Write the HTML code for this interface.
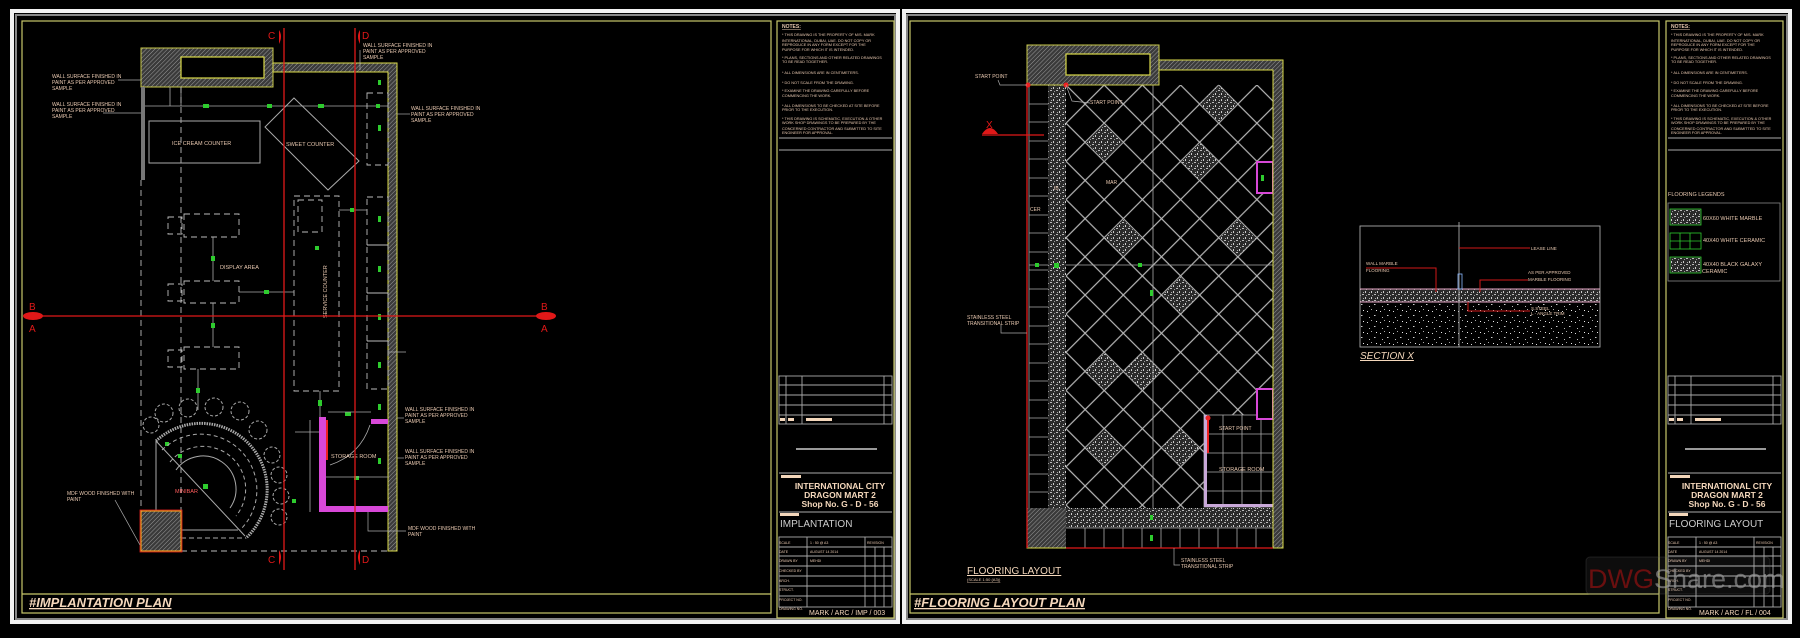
<!DOCTYPE html>
<html><head><meta charset="utf-8"><style>
html,body{margin:0;padding:0;background:#000;}
svg{display:block;}
text{font-family:"Liberation Sans",sans-serif;}
</style></head><body>
<svg width="1800" height="638" viewBox="0 0 1800 638" xmlns="http://www.w3.org/2000/svg">
<defs>
<pattern id="hatch" width="3" height="3" patternUnits="userSpaceOnUse" patternTransform="rotate(45)">
<rect width="3" height="3" fill="#3a3a3a"/><line x1="0" y1="0" x2="0" y2="3" stroke="#9a9a9a" stroke-width="1"/></pattern>
<pattern id="dots" width="6" height="6" patternUnits="userSpaceOnUse">
<rect width="6" height="6" fill="#2a2a2a"/><rect x="0" y="0" width="2" height="1" fill="#bbb"/><rect x="3" y="3" width="1" height="2" fill="#ccc"/><rect x="4" y="1" width="1" height="1" fill="#999"/><rect x="1" y="4" width="1" height="1" fill="#aaa"/></pattern>
<pattern id="speck" width="13" height="11" patternUnits="userSpaceOnUse">
<rect x="2" y="3" width="1" height="1" fill="#ddd"/><rect x="9" y="7" width="1.5" height="1" fill="#ccc"/><rect x="6" y="1" width="1" height="1" fill="#aaa"/><rect x="11" y="2" width="1" height="1" fill="#eee"/><rect x="4" y="9" width="1" height="1" fill="#bbb"/></pattern>
<pattern id="diag" width="27" height="27" patternUnits="userSpaceOnUse" patternTransform="translate(1066,85) rotate(45)">
<rect width="27" height="27" fill="none" stroke="#b8b8b8" stroke-width="1.2"/></pattern>
<clipPath id="fl"><rect x="1066" y="85" width="207" height="423"/></clipPath>
</defs>

<!-- ============ LEFT SHEET ============ -->
<rect x="12" y="11" width="886" height="611" fill="none" stroke="#f2f2f2" stroke-width="4"/>
<rect x="16" y="15" width="879" height="604" fill="none" stroke="#888" stroke-width="2"/>
<rect x="22" y="21" width="749" height="592" fill="none" stroke="#c8c86a" stroke-width="1.2"/>
<line x1="22" y1="594" x2="771" y2="594" stroke="#c8c86a" stroke-width="1.2"/>
<text x="29" y="607" font-size="13" font-weight="bold" font-style="italic" fill="#f5d8bc" text-decoration="underline">#IMPLANTATION PLAN</text>

<rect x="141" y="48" width="40" height="39" fill="url(#hatch)"/>
<rect x="181" y="48" width="92" height="39" fill="url(#hatch)"/>
<rect x="181" y="57" width="83" height="21" fill="#000" stroke="#dada4a" stroke-width="1.2"/>
<rect x="141" y="48" width="132" height="39" fill="none" stroke="#c8c84a" stroke-width="1"/>
<rect x="273" y="63" width="124" height="9" fill="url(#hatch)"/>
<rect x="388" y="63" width="9" height="488" fill="url(#hatch)"/>
<path d="M273 63 H397 V551 H388 V72 H273 Z" fill="none" stroke="#dada4a" stroke-width="1"/>
<rect x="141" y="87" width="4" height="93" fill="#777"/>
<line x1="145" y1="106" x2="388" y2="106" stroke="#aaa" stroke-width="0.8"/>
<line x1="181" y1="87" x2="181" y2="106" stroke="#aaa" stroke-width="0.8"/>
<line x1="170" y1="87" x2="170" y2="106" stroke="#aaa" stroke-width="0.8"/>
<g stroke="#bbb" stroke-width="0.9" fill="none" stroke-dasharray="6,4">
<line x1="181" y1="87" x2="181" y2="551"/>
<line x1="141" y1="180" x2="141" y2="511"/>
<line x1="181" y1="551" x2="388" y2="551"/>
<rect x="367" y="93" width="21" height="72"/>
<rect x="367" y="197" width="21" height="48"/>
<rect x="367" y="245" width="21" height="48"/>
<rect x="367" y="293" width="21" height="48"/>
<rect x="367" y="341" width="21" height="48"/>
<rect x="294" y="196" width="45" height="195"/>
<rect x="298" y="200" width="24" height="32"/>
<rect x="184" y="214" width="55" height="23"/><rect x="168" y="217" width="14" height="17"/>
<rect x="184" y="281" width="55" height="22"/><rect x="168" y="284" width="14" height="17"/>
<rect x="184" y="347" width="55" height="22"/><rect x="168" y="350" width="14" height="17"/>
</g>
<rect x="149" y="121" width="111" height="42" fill="none" stroke="#aaa" stroke-width="1"/>
<text x="172" y="145" font-size="5.5" fill="#e8c8b0">ICE CREAM COUNTER</text>
<polygon points="294,98 359,161 328,190 265,127" fill="none" stroke="#aaa" stroke-width="1"/>
<text x="286" y="146" font-size="5.5" fill="#e8c8b0">SWEET COUNTER</text>
<text x="220" y="269" font-size="5.5" fill="#e8c8b0">DISPLAY AREA</text>
<text x="327" y="318" font-size="5.5" fill="#e8c8b0" transform="rotate(-90 327 318)">SERVICE COUNTER</text>
<g stroke="#aaa" stroke-width="0.8">
<line x1="213" y1="237" x2="213" y2="281"/><line x1="213" y1="303" x2="213" y2="347"/>
<line x1="239" y1="292" x2="294" y2="292"/><line x1="339" y1="210" x2="367" y2="210"/>
<line x1="198" y1="369" x2="198" y2="410"/><line x1="320" y1="391" x2="320" y2="417"/>
<line x1="388" y1="352" x2="406" y2="352"/>
</g>
<g fill="#2ecc2e"><rect x="203" y="104" width="6" height="4"/><rect x="267" y="104" width="5" height="4"/><rect x="318" y="104" width="6" height="4"/><rect x="376" y="104" width="4" height="4"/><rect x="378" y="80" width="3" height="5"/><rect x="378" y="125" width="3" height="6"/><rect x="378" y="216" width="3" height="6"/><rect x="378" y="266" width="3" height="6"/><rect x="378" y="314" width="3" height="6"/><rect x="378" y="362" width="3" height="6"/><rect x="378" y="404" width="3" height="6"/><rect x="350" y="208" width="4" height="4"/><rect x="315" y="246" width="4" height="4"/><rect x="211" y="256" width="4" height="5"/><rect x="211" y="323" width="4" height="5"/><rect x="264" y="290" width="5" height="4"/><rect x="196" y="388" width="4" height="5"/><rect x="318" y="400" width="4" height="6"/><rect x="345" y="412" width="6" height="4"/><rect x="378" y="458" width="3" height="6"/><rect x="354" y="476" width="5" height="4"/><rect x="292" y="499" width="4" height="4"/><rect x="203" y="484" width="5" height="5"/><rect x="165" y="442" width="4" height="4"/><rect x="178" y="454" width="4" height="4"/></g>
<g fill="none" stroke="#aaa" stroke-width="1">
<path d="M156 441 A61 61 0 1 1 246 538" stroke-width="3" stroke-dasharray="1.5,1"/>
<path d="M162 450 A52 52 0 1 1 240 530" stroke-dasharray="4,3"/>
<path d="M170 462 A40 40 0 1 1 236 516" stroke-dasharray="4,3"/>
<path d="M176 470 A32 32 0 1 1 230 508"/>
<line x1="156" y1="441" x2="245" y2="536"/>
<line x1="156" y1="441" x2="156" y2="520"/>
<line x1="181" y1="538" x2="246" y2="538" stroke-dasharray="5,3"/>
<line x1="181" y1="530" x2="238" y2="530"/>
<g stroke-dasharray="3,2"><circle cx="164" cy="413" r="9"/><circle cx="188" cy="408" r="9"/><circle cx="214" cy="407" r="9"/><circle cx="240" cy="411" r="9"/><circle cx="258" cy="430" r="9"/><circle cx="272" cy="455" r="8"/><circle cx="279" cy="475" r="8"/><circle cx="281" cy="496" r="8"/><circle cx="279" cy="517" r="8"/><circle cx="151" cy="425" r="8"/></g>
</g>
<text x="175" y="493" font-size="5.5" fill="#ff5c5c">MINIBAR</text>
<rect x="141" y="511" width="40" height="40" fill="url(#hatch)" stroke="#f0a020" stroke-width="1.2"/>
<rect x="140" y="510" width="42" height="42" fill="none" stroke="#e02020" stroke-width="0.8"/>
<rect x="319" y="417" width="7" height="95" fill="#d848d8"/>
<rect x="319" y="506" width="69" height="6" fill="#d848d8"/>
<rect x="371" y="419" width="17" height="5" fill="#d848d8"/>
<rect x="326" y="420" width="2" height="40" fill="#e22"/>
<g stroke="#aaa" stroke-width="0.8" fill="none"><line x1="328" y1="412" x2="371" y2="412"/><line x1="326" y1="477" x2="388" y2="477"/><line x1="310" y1="420" x2="310" y2="512"/><line x1="295" y1="432" x2="319" y2="432"/><path d="M330 465 Q360 455 370 425"/></g>
<text x="331" y="458" font-size="5.5" fill="#e8c8b0">STORAGE ROOM</text>
<g stroke="#e01818" stroke-width="1.3">
<line x1="284" y1="28" x2="284" y2="570"/><line x1="355" y1="28" x2="355" y2="570"/>
<line x1="28" y1="316" x2="552" y2="316"/></g>
<g fill="#e01818"><path d="M279 30 Q283 36 279 44 Z"/><path d="M360 30 Q356 36 360 44 Z"/><path d="M279 550 Q283 557 279 565 Z"/><path d="M360 550 Q356 557 360 565 Z"/>
<ellipse cx="33" cy="316" rx="10" ry="4"/><ellipse cx="546" cy="316" rx="10" ry="4"/></g>
<g fill="#e01818" font-size="10"><text x="268" y="39">C</text><text x="362" y="39">D</text><text x="268" y="563">C</text><text x="362" y="563">D</text><text x="29" y="310">B</text><text x="29" y="332">A</text><text x="541" y="310">B</text><text x="541" y="332">A</text></g>
<g font-size="5" fill="#e8c8b0">
<text x="52" y="78">WALL SURFACE FINISHED IN</text><text x="52" y="84">PAINT AS PER APPROVED</text><text x="52" y="90">SAMPLE</text>
<text x="52" y="106">WALL SURFACE FINISHED IN</text><text x="52" y="112">PAINT AS PER APPROVED</text><text x="52" y="118">SAMPLE</text>
<text x="363" y="47">WALL SURFACE FINISHED IN</text><text x="363" y="53">PAINT AS PER APPROVED</text><text x="363" y="59">SAMPLE</text>
<text x="411" y="110">WALL SURFACE FINISHED IN</text><text x="411" y="116">PAINT AS PER APPROVED</text><text x="411" y="122">SAMPLE</text>
<text x="405" y="411">WALL SURFACE FINISHED IN</text><text x="405" y="417">PAINT AS PER APPROVED</text><text x="405" y="423">SAMPLE</text>
<text x="405" y="453">WALL SURFACE FINISHED IN</text><text x="405" y="459">PAINT AS PER APPROVED</text><text x="405" y="465">SAMPLE</text>
<text x="67" y="495">MDF WOOD FINISHED WITH</text><text x="67" y="501">PAINT</text>
<text x="408" y="530">MDF WOOD FINISHED WITH</text><text x="408" y="536">PAINT</text>
</g>
<g stroke="#aaa" stroke-width="0.7" fill="none"><polyline points="118,80 141,80"/><polyline points="103,113 141,113"/><polyline points="360,50 360,70"/><polyline points="397,114 410,114"/><polyline points="397,418 404,418"/><polyline points="397,458 404,458"/><polyline points="115,500 140,545"/><polyline points="368,512 368,531 406,531"/></g>

<rect x="777" y="21" width="117" height="597" fill="none" stroke="#c8c86a" stroke-width="1.2"/>
<g font-size="3.8" fill="#e8c8b0">
<text x="782" y="28" font-size="5" font-weight="bold" text-decoration="underline">NOTES:</text>
<text x="782" y="36">* THIS DRAWING IS THE PROPERTY OF M/S. MARK</text>
<text x="782" y="42">INTERNATIONAL, DUBAI, UAE. DO NOT COPY OR</text>
<text x="782" y="46">REPRODUCE IN ANY FORM EXCEPT FOR THE</text>
<text x="782" y="51">PURPOSE FOR WHICH IT IS INTENDED.</text>
<text x="782" y="59">* PLANS, SECTIONS AND OTHER RELATED DRAWINGS</text>
<text x="782" y="63">TO BE READ TOGETHER.</text>
<text x="782" y="74">* ALL DIMENSIONS ARE IN CENTIMETERS.</text>
<text x="782" y="84">* DO NOT SCALE FROM THE DRAWING.</text>
<text x="782" y="92">* EXAMINE THE DRAWING CAREFULLY BEFORE</text>
<text x="782" y="97">COMMENCING THE WORK.</text>
<text x="782" y="107">* ALL DIMENSIONS TO BE CHECKED AT SITE BEFORE</text>
<text x="782" y="111">PRIOR TO THE EXECUTION.</text>
<text x="782" y="120">* THIS DRAWING IS SCHEMATIC, EXECUTION &amp; OTHER</text>
<text x="782" y="124">WORK SHOP DRAWINGS TO BE PREPARED BY THE</text>
<text x="782" y="130">CONCERNED CONTRACTOR AND SUBMITTED TO SITE</text>
<text x="782" y="134">ENGINEER FOR APPROVAL.</text>
</g>
<g stroke="#aaa" stroke-width="0.9" fill="none">
<line x1="779" y1="138" x2="892" y2="138"/><line x1="779" y1="150" x2="892" y2="150"/>
<rect x="779" y="376" width="113" height="48"/>
<line x1="779" y1="385" x2="892" y2="385"/><line x1="779" y1="395" x2="892" y2="395"/><line x1="779" y1="405" x2="892" y2="405"/><line x1="779" y1="415" x2="892" y2="415"/>
<line x1="786" y1="376" x2="786" y2="424"/><line x1="802" y1="376" x2="802" y2="424"/><line x1="884" y1="376" x2="884" y2="424"/>
<line x1="779" y1="473" x2="892" y2="473"/><line x1="779" y1="512" x2="892" y2="512"/>
<rect x="779" y="537" width="113" height="70"/>
<line x1="779" y1="547" x2="892" y2="547"/><line x1="779" y1="556" x2="892" y2="556"/><line x1="779" y1="566" x2="892" y2="566"/><line x1="779" y1="576" x2="892" y2="576"/><line x1="779" y1="586" x2="892" y2="586"/><line x1="779" y1="596" x2="892" y2="596"/>
<line x1="807" y1="537" x2="807" y2="607"/><line x1="865" y1="537" x2="865" y2="607"/><line x1="875" y1="547" x2="875" y2="607"/><line x1="884" y1="547" x2="884" y2="607"/>
</g>
<line x1="796" y1="449" x2="877" y2="449" stroke="#ccc" stroke-width="1.5"/>
<g fill="#f5d8bc"><rect x="780" y="418" width="5" height="3"/><rect x="788" y="418" width="6" height="3"/><rect x="806" y="418" width="26" height="3"/><rect x="781" y="475" width="20" height="3"/><rect x="780" y="513" width="19" height="3"/></g>
<g fill="#f5d8bc" font-weight="bold" font-size="8.5" text-anchor="middle">
<text x="840" y="489">INTERNATIONAL CITY</text><text x="840" y="498">DRAGON MART 2</text><text x="840" y="507">Shop No. G - D - 56</text></g>
<text x="780" y="527" font-size="10" fill="#ccc">IMPLANTATION</text>
<g font-size="3.5" fill="#e8c8b0"><text x="779" y="544">SCALE</text><text x="779" y="553">DATE</text><text x="779" y="562">DRAWN BY</text><text x="779" y="572">CHECKED BY</text><text x="779" y="582">ARCH.</text><text x="779" y="591">STRUCT.</text><text x="779" y="601">PROJECT NO.</text><text x="779" y="610">DRAWING NO.</text><text x="810" y="544">1 : 50 @ A3</text><text x="810" y="553">AUGUST 14 2014</text><text x="810" y="562">MEHDI</text><text x="867" y="544">REVISION</text></g>
<text x="809" y="615" font-size="7" fill="#f5d8bc">MARK / ARC / IMP / 003</text>

<!-- ============ RIGHT SHEET ============ -->
<rect x="904" y="11" width="886" height="611" fill="none" stroke="#f2f2f2" stroke-width="4"/>
<rect x="907" y="15" width="880" height="604" fill="none" stroke="#888" stroke-width="2"/>
<rect x="910" y="21" width="749" height="592" fill="none" stroke="#c8c86a" stroke-width="1.2"/>
<line x1="910" y1="594" x2="1659" y2="594" stroke="#c8c86a" stroke-width="1.2"/>
<text x="914" y="607" font-size="13" font-weight="bold" font-style="italic" fill="#f5d8bc" text-decoration="underline">#FLOORING LAYOUT PLAN</text>

<g clip-path="url(#fl)"><rect x="1000" y="0" width="400" height="600" fill="url(#diag)"/></g>
<g fill="url(#dots)" stroke="#bbb" stroke-width="0.6">
<polygon points="1104.2,123.3 1123.2,142.3 1104.2,161.3 1085.2,142.3"/>
<polygon points="1199.6,142.4 1218.6,161.4 1199.6,180.4 1180.6,161.4"/>
<polygon points="1218.7,85.1 1237.7,104.1 1218.7,123.1 1199.7,104.1"/>
<polygon points="1123.3,218.7 1142.3,237.7 1123.3,256.7 1104.3,237.7"/>
<polygon points="1237.8,218.7 1256.8,237.7 1237.8,256.7 1218.8,237.7"/>
<polygon points="1180.5,276 1199.5,295 1180.5,314 1161.5,295"/>
<polygon points="1104.2,352.4 1123.2,371.4 1104.2,390.4 1085.2,371.4"/>
<polygon points="1142.4,352.4 1161.4,371.4 1142.4,390.4 1123.4,371.4"/>
<polygon points="1104.2,428.7 1123.2,447.7 1104.2,466.7 1085.2,447.7"/>
<polygon points="1180.5,428.7 1199.5,447.7 1180.5,466.7 1161.5,447.7"/>
</g>
<line x1="1153" y1="85" x2="1153" y2="508" stroke="#aaa" stroke-width="0.8"/>
<line x1="1029" y1="265" x2="1273" y2="265" stroke="#aaa" stroke-width="0.8"/>
<rect x="1048" y="85" width="18" height="423" fill="url(#dots)"/>
<g stroke="#aaa" stroke-width="0.8"><line x1="1029" y1="85" x2="1029" y2="508"/>
<line x1="1029" y1="104" x2="1048" y2="104"/><line x1="1029" y1="122" x2="1048" y2="122"/><line x1="1029" y1="141" x2="1048" y2="141"/><line x1="1029" y1="159" x2="1048" y2="159"/><line x1="1029" y1="178" x2="1048" y2="178"/><line x1="1029" y1="196" x2="1048" y2="196"/><line x1="1029" y1="215" x2="1048" y2="215"/><line x1="1029" y1="233" x2="1048" y2="233"/><line x1="1029" y1="252" x2="1048" y2="252"/><line x1="1029" y1="270" x2="1048" y2="270"/><line x1="1029" y1="289" x2="1048" y2="289"/><line x1="1029" y1="307" x2="1048" y2="307"/><line x1="1029" y1="326" x2="1048" y2="326"/><line x1="1029" y1="344" x2="1048" y2="344"/><line x1="1029" y1="363" x2="1048" y2="363"/><line x1="1029" y1="381" x2="1048" y2="381"/><line x1="1029" y1="400" x2="1048" y2="400"/><line x1="1029" y1="418" x2="1048" y2="418"/><line x1="1029" y1="437" x2="1048" y2="437"/><line x1="1029" y1="455" x2="1048" y2="455"/><line x1="1029" y1="474" x2="1048" y2="474"/><line x1="1029" y1="492" x2="1048" y2="492"/></g>
<rect x="1066" y="508" width="207" height="20" fill="url(#dots)"/>
<g stroke="#aaa" stroke-width="0.8"><line x1="1066" y1="528" x2="1273" y2="528"/><line x1="1085" y1="528" x2="1085" y2="548"/><line x1="1104" y1="528" x2="1104" y2="548"/><line x1="1123" y1="528" x2="1123" y2="548"/><line x1="1142" y1="528" x2="1142" y2="548"/><line x1="1161" y1="528" x2="1161" y2="548"/><line x1="1180" y1="528" x2="1180" y2="548"/><line x1="1199" y1="528" x2="1199" y2="548"/><line x1="1218" y1="528" x2="1218" y2="548"/><line x1="1237" y1="528" x2="1237" y2="548"/><line x1="1256" y1="528" x2="1256" y2="548"/></g>
<rect x="1204" y="415" width="69" height="92" fill="#000"/>
<g stroke="#aaa" stroke-width="0.8" fill="none"><rect x="1204" y="415" width="69" height="92"/><line x1="1223" y1="415" x2="1223" y2="507"/><line x1="1242" y1="415" x2="1242" y2="507"/><line x1="1261" y1="415" x2="1261" y2="507"/><line x1="1204" y1="434" x2="1273" y2="434"/><line x1="1204" y1="453" x2="1273" y2="453"/><line x1="1204" y1="472" x2="1273" y2="472"/><line x1="1204" y1="491" x2="1273" y2="491"/></g>
<rect x="1204" y="504" width="69" height="3" fill="#c8a8d8"/><rect x="1204" y="415" width="3" height="92" fill="#c8a8d8"/>
<rect x="1207" y="420" width="2" height="33" fill="#e22"/>
<text x="1219" y="471" font-size="5.5" fill="#e8c8b0">STORAGE ROOM</text>
<text x="1219" y="430" font-size="5" fill="#e8c8b0">START POINT</text>
<rect x="1257" y="162" width="16" height="31" fill="#000" stroke="#d848d8" stroke-width="2"/>
<rect x="1257" y="389" width="16" height="30" fill="#000" stroke="#d848d8" stroke-width="2"/>
<rect x="1027" y="45" width="39" height="40" fill="url(#hatch)"/>
<rect x="1066" y="45" width="93" height="40" fill="url(#hatch)"/>
<rect x="1066" y="54" width="84" height="21" fill="#000" stroke="#dada4a" stroke-width="1.2"/>
<rect x="1027" y="45" width="132" height="40" fill="none" stroke="#c8c84a" stroke-width="1"/>
<rect x="1159" y="60" width="124" height="10" fill="url(#hatch)"/>
<rect x="1273" y="60" width="10" height="488" fill="url(#hatch)"/>
<path d="M1159 60 H1283 V548 H1273 V70 H1159 Z" fill="none" stroke="#dada4a" stroke-width="1"/>
<rect x="1027" y="508" width="39" height="40" fill="url(#hatch)"/>
<path d="M1027 85 V548 H1283" fill="none" stroke="#dada4a" stroke-width="1"/>
<line x1="1027" y1="85" x2="1027" y2="548" stroke="#e01818" stroke-width="1.3"/>
<line x1="1066" y1="548" x2="1273" y2="548" stroke="#e01818" stroke-width="1.3"/>
<circle cx="1028" cy="85" r="2.5" fill="#e22"/><circle cx="1066" cy="85" r="2.5" fill="#e22"/><circle cx="1208" cy="418" r="2.5" fill="#e22"/>
<line x1="982" y1="135" x2="1044" y2="135" stroke="#e01818" stroke-width="1.3"/>
<path d="M982 134 Q990 122 998 134 Z" fill="#e01818"/>
<text x="986" y="128" font-size="10" fill="#e01818">X</text>
<g fill="#2ecc2e"><rect x="1035" y="263" width="4" height="4"/><rect x="1054" y="263" width="5" height="5"/><rect x="1138" y="263" width="4" height="4"/><rect x="1150" y="290" width="3" height="6"/><rect x="1261" y="175" width="3" height="6"/><rect x="1150" y="515" width="3" height="5"/><rect x="1150" y="535" width="3" height="6"/></g>
<g font-size="5" fill="#e8c8b0">
<text x="975" y="78">START POINT</text><text x="1090" y="104">START POINT</text>
<text x="1106" y="184">MAR</text><text x="1030" y="211">CER</text><text x="1054" y="190">IB</text>
<text x="967" y="319">STAINLESS STEEL</text><text x="967" y="325">TRANSITIONAL STRIP</text>
<text x="1181" y="562">STAINLESS STEEL</text><text x="1181" y="568">TRANSITIONAL STRIP</text>
</g>
<g stroke="#aaa" stroke-width="0.7" fill="none"><polyline points="998,80 1000,85 1027,85"/><polyline points="1066,85 1072,101 1090,103"/><polyline points="1001,325 1001,333 1027,333"/><polyline points="1174,548 1174,565 1180,565"/></g>
<text x="967" y="574" font-size="10" fill="#f5d8bc" text-decoration="underline">FLOORING LAYOUT</text>
<text x="967" y="581" font-size="4" fill="#e8c8b0" text-decoration="underline">(SCALE 1:50 (A3))</text>

<rect x="1360" y="302" width="240" height="45" fill="url(#speck)"/>
<rect x="1360" y="289" width="240" height="13" fill="url(#dots)"/>
<rect x="1360" y="226" width="240" height="121" fill="none" stroke="#aaa" stroke-width="0.9"/>
<line x1="1360" y1="289" x2="1600" y2="289" stroke="#e8a8c8" stroke-width="1"/>
<line x1="1360" y1="302" x2="1600" y2="302" stroke="#e8a8c8" stroke-width="1"/>
<line x1="1459" y1="222" x2="1459" y2="347" stroke="#aaa" stroke-width="0.9"/>
<rect x="1458" y="274" width="4" height="15" fill="none" stroke="#8ab8ff" stroke-width="0.8"/>
<g stroke="#d01818" stroke-width="1" fill="none"><polyline points="1459,248 1530,248"/><polyline points="1366,268 1436,268 1436,292"/><polyline points="1480,292 1480,280 1528,280"/><polyline points="1468,302 1468,311 1530,311"/></g>
<g font-size="4.5" fill="#e8c8b0"><text x="1531" y="250">LEASE LINE</text><text x="1366" y="265">WALL MARBLE</text><text x="1366" y="272">FLOORING</text><text x="1528" y="274">AS PER APPROVED</text><text x="1528" y="281">MARBLE FLOORING</text><text x="1531" y="310">S.STEEL</text><text x="1531" y="315">L - ANGLE TRIM</text></g>
<text x="1360" y="359" font-size="10" font-style="italic" fill="#f5d8bc" text-decoration="underline">SECTION X</text>

<rect x="1666" y="21" width="117" height="597" fill="none" stroke="#c8c86a" stroke-width="1.2"/>
<g font-size="3.8" fill="#e8c8b0">
<text x="1671" y="28" font-size="5" font-weight="bold" text-decoration="underline">NOTES:</text>
<text x="1671" y="36">* THIS DRAWING IS THE PROPERTY OF M/S. MARK</text>
<text x="1671" y="42">INTERNATIONAL, DUBAI, UAE. DO NOT COPY OR</text>
<text x="1671" y="46">REPRODUCE IN ANY FORM EXCEPT FOR THE</text>
<text x="1671" y="51">PURPOSE FOR WHICH IT IS INTENDED.</text>
<text x="1671" y="59">* PLANS, SECTIONS AND OTHER RELATED DRAWINGS</text>
<text x="1671" y="63">TO BE READ TOGETHER.</text>
<text x="1671" y="74">* ALL DIMENSIONS ARE IN CENTIMETERS.</text>
<text x="1671" y="84">* DO NOT SCALE FROM THE DRAWING.</text>
<text x="1671" y="92">* EXAMINE THE DRAWING CAREFULLY BEFORE</text>
<text x="1671" y="97">COMMENCING THE WORK.</text>
<text x="1671" y="107">* ALL DIMENSIONS TO BE CHECKED AT SITE BEFORE</text>
<text x="1671" y="111">PRIOR TO THE EXECUTION.</text>
<text x="1671" y="120">* THIS DRAWING IS SCHEMATIC, EXECUTION &amp; OTHER</text>
<text x="1671" y="124">WORK SHOP DRAWINGS TO BE PREPARED BY THE</text>
<text x="1671" y="130">CONCERNED CONTRACTOR AND SUBMITTED TO SITE</text>
<text x="1671" y="134">ENGINEER FOR APPROVAL.</text>
</g>
<text x="1668" y="196" font-size="5.5" fill="#e8c8b0">FLOORING LEGENDS</text>
<rect x="1668" y="203" width="112" height="78" fill="none" stroke="#888" stroke-width="0.8"/>
<rect x="1670" y="209" width="31" height="16" fill="url(#dots)" stroke="#2ecc2e" stroke-width="0.8"/>
<g stroke="#2ecc2e" stroke-width="0.8" fill="none"><rect x="1670" y="233" width="31" height="16"/><line x1="1680" y1="233" x2="1680" y2="249"/><line x1="1690" y1="233" x2="1690" y2="249"/><line x1="1670" y1="241" x2="1701" y2="241"/></g>
<rect x="1670" y="257" width="31" height="16" fill="url(#dots)" stroke="#2ecc2e" stroke-width="0.8"/>
<g font-size="5.5" fill="#e8c8b0"><text x="1703" y="220">60X60 WHITE MARBLE</text><text x="1703" y="242">40X40 WHITE CERAMIC</text><text x="1703" y="266">40X40 BLACK GALAXY</text><text x="1702" y="273">CERAMIC</text></g>
<g stroke="#aaa" stroke-width="0.9" fill="none">
<line x1="1668" y1="138" x2="1781" y2="138"/><line x1="1668" y1="150" x2="1781" y2="150"/>
<rect x="1668" y="376" width="113" height="48"/>
<line x1="1668" y1="385" x2="1781" y2="385"/><line x1="1668" y1="395" x2="1781" y2="395"/><line x1="1668" y1="405" x2="1781" y2="405"/><line x1="1668" y1="415" x2="1781" y2="415"/>
<line x1="1675" y1="376" x2="1675" y2="424"/><line x1="1691" y1="376" x2="1691" y2="424"/><line x1="1773" y1="376" x2="1773" y2="424"/>
<line x1="1668" y1="473" x2="1781" y2="473"/><line x1="1668" y1="512" x2="1781" y2="512"/>
<rect x="1668" y="537" width="113" height="70"/>
<line x1="1668" y1="547" x2="1781" y2="547"/><line x1="1668" y1="556" x2="1781" y2="556"/><line x1="1668" y1="566" x2="1781" y2="566"/><line x1="1668" y1="576" x2="1781" y2="576"/><line x1="1668" y1="586" x2="1781" y2="586"/><line x1="1668" y1="596" x2="1781" y2="596"/>
<line x1="1696" y1="537" x2="1696" y2="607"/><line x1="1754" y1="537" x2="1754" y2="607"/><line x1="1764" y1="547" x2="1764" y2="607"/><line x1="1773" y1="547" x2="1773" y2="607"/>
</g>
<line x1="1685" y1="449" x2="1766" y2="449" stroke="#ccc" stroke-width="1.5"/>
<g fill="#f5d8bc"><rect x="1669" y="418" width="5" height="3"/><rect x="1677" y="418" width="6" height="3"/><rect x="1695" y="418" width="26" height="3"/><rect x="1670" y="475" width="20" height="3"/><rect x="1669" y="513" width="19" height="3"/></g>
<g fill="#f5d8bc" font-weight="bold" font-size="8.5" text-anchor="middle">
<text x="1727" y="489">INTERNATIONAL CITY</text><text x="1727" y="498">DRAGON MART 2</text><text x="1727" y="507">Shop No. G - D - 56</text></g>
<text x="1669" y="527" font-size="10" fill="#ccc">FLOORING LAYOUT</text>
<g font-size="3.5" fill="#e8c8b0"><text x="1668" y="544">SCALE</text><text x="1668" y="553">DATE</text><text x="1668" y="562">DRAWN BY</text><text x="1668" y="572">CHECKED BY</text><text x="1668" y="582">ARCH.</text><text x="1668" y="591">STRUCT.</text><text x="1668" y="601">PROJECT NO.</text><text x="1668" y="610">DRAWING NO.</text><text x="1699" y="544">1 : 50 @ A3</text><text x="1699" y="553">AUGUST 14 2014</text><text x="1699" y="562">MEHDI</text><text x="1756" y="544">REVISION</text></g>
<text x="1699" y="615" font-size="7" fill="#f5d8bc">MARK / ARC / FL / 004</text>

<rect x="1586" y="557" width="184" height="37" rx="4" fill="#fff" fill-opacity="0.05" stroke="#555" stroke-opacity="0.3"/>
<text x="1588" y="588" font-size="27" fill="#8a1010" fill-opacity="0.75">DWG<tspan fill="#9a9a9a" fill-opacity="0.65">Share.com</tspan></text>
</svg>
</body></html>
